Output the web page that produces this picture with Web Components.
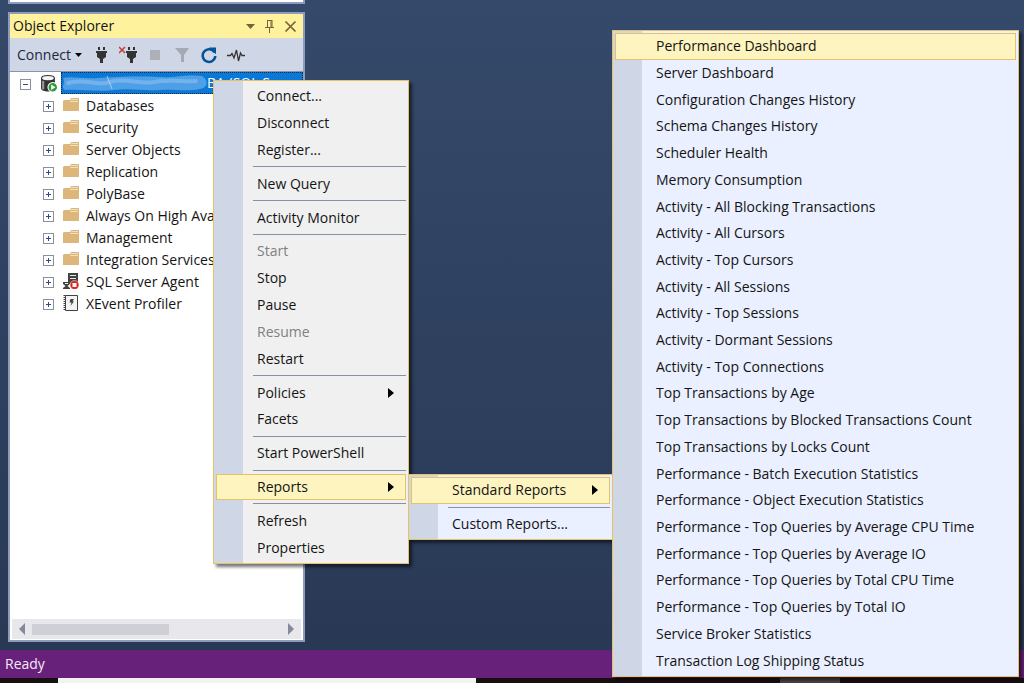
<!DOCTYPE html>
<html lang="en">
<head>
<meta charset="utf-8">
<title>Object Explorer</title>
<style>
html,body{margin:0;height:100%}
body{font-family:"Open Sans","Noto Sans",sans-serif;font-size:14px;color:#141414;overflow:hidden}
</style>
</head>
<body>
<studio-shell></studio-shell>
<script>
const define=(name,html,setup)=>customElements.define(name,class extends HTMLElement{
  connectedCallback(){
    if(this.shadowRoot)return;
    this.attachShadow({mode:'open'}).innerHTML=html;
    if(setup)setup(this,this.shadowRoot);
  }
});

const icons={
  folder:'<path fill="#dcb67a" d="M0 4l1-1h6l1-2h8v13H0z"/><path fill="#f3dfbb" d="M8 2h7v1H8zM7 4h8v1H7z"/>',
  server:'<path fill="#333" d="M1 3v10c0 4 13 4 13 0V3z"/><ellipse cx="7.500" cy="3.500" rx="6" ry="2.500" fill="#f4f4f4" stroke="#333"/><path fill="#999" d="M2 6h2v8H2z"/><circle cx="12" cy="12" r="4.500" fill="#309a3c" stroke="#fff"/><path fill="#fff" d="M10.500 9.500v5l4-2.500z"/>',
  agent:'<path fill="#424242" d="M5 0h10v10H5z"/><path stroke="#e8e8e8" d="M7 2.500h6M7 5.500h6"/><path fill="#424242" d="M0 9h7v2L4.500 13 7 15v1H0v-1l2.500-2L0 11z"/><path stroke="#eee" d="M2 10.500h3"/><circle cx="11.500" cy="12" r="4.500" fill="#e02214" stroke="#fff" stroke-width=".5"/><path fill="#fff" d="M9.500 10h4v4h-4z"/>',
  event:'<path fill="#f3f3f5" stroke="#424242" d="M2.500.500h12v15h-12z"/><path stroke="#424242" stroke-width="2" stroke-dasharray="1 1" d="M1.500 0v16"/><path fill="#424242" d="M7.500 4H11L9.500 6.500H11L7.500 11l1-3.500H6.500z"/>'
};

define('tree-node',`<style>
:host{display:flex;align-items:center;height:22px;padding-left:33px;white-space:nowrap}
:host([root]){padding-left:10px}
button{box-sizing:border-box;width:11px;height:11px;padding:0;border:1px solid #8b8f98;background:#fff;flex:none;position:relative;top:1px}
button::before,:host(:not([root])) button::after{content:"";position:absolute;left:2px;top:4px;width:5px;height:1px;background:#2f4a8f}
:host(:not([root])) button::after{left:4px;top:2px;width:1px;height:5px}
svg{width:16px;height:16px;margin:0 7px 0 9px;flex:none}
:host([root]) svg{width:17px;height:18px;margin:0 4px 0 9px}
:host([root]) .label{box-sizing:border-box;flex:1;height:22px;line-height:19px;background:#0a78d4;color:#fff;border:1px dotted #152b44;text-align:left;display:flex;overflow:hidden}
.smear{display:none}
:host([root]) .smear{display:block;width:145px;height:20px;margin:0;flex:none}
</style><button aria-label="Expand or collapse"></button><svg class="icon" viewBox="0 0 16 16"></svg><span class="label"><svg class="smear" viewBox="0 0 145 20"><path d="M1 5c10-2 20 1 35 0s40-2 60-1 26-3 44-1c7 4 6 12-2 13-15 3-22 0-40 1s-30-2-45 0-35-1-50 0c-5-3 1-7-2-12z" fill="#4f9fe6"/><path d="M6 10c20-5 28 4 42-1s30 3 44 0 28 0 42-1" fill="none" stroke="#72b3ee" stroke-width="4" stroke-linecap="round"/><path d="M45 3l5 13" stroke="#a3cff5"/></svg><slot></slot></span>`,
(h,r)=>{r.querySelector('.icon').innerHTML=icons[h.getAttribute('icon')||'folder']});

define('scroll-strip',`<style>
:host{display:flex;align-items:center;height:20px;margin:0 2px 1px;background:#e8e8ec;padding:0 6px}
button{border:0;padding:0;background:none;display:flex}svg{width:8px;height:12px;fill:#868999}
.track{flex:1;margin:0 6px}.thumb{width:55%;height:11px;background:#cfd0d6}
</style><button aria-label="Scroll left"><svg viewBox="0 0 8 12"><path d="M7 0v12L1 6z"/></svg></button><div class="track"><div class="thumb"></div></div><button aria-label="Scroll right"><svg viewBox="0 0 8 12"><path d="M1 0v12l6-6z"/></svg></button>`);

define('object-explorer',`<style>
:host{box-sizing:border-box;display:flex;flex-direction:column;border:2px solid #8e9bbc;background:#fff;min-height:0}
header{display:flex;align-items:center;height:24px;background:#fff29d;padding:0 6px 0 3px;line-height:24px}
h1{font-size:14px;font-weight:400;margin:0;flex:1}
button{font:inherit;color:inherit;border:0;padding:0;background:none;display:flex;align-items:center}
header .set{display:flex;gap:9px;align-items:center}
nav{display:flex;align-items:center;height:33px;background:#cfd6e5;padding-left:7px;color:#1b293e}
nav svg{width:18px;height:18px}
nav .tools{display:flex;margin-left:10px;gap:9px}
nav .caret{width:7px;height:4px;margin-left:4px}
.tree{flex:1;border-top:1px solid #8a93a8;min-height:0;overflow:hidden}
</style><header><h1>Object Explorer</h1><div class="set">
<button aria-label="Window position"><svg width="9" height="5"><path d="M0 0h9L4.500 5z" fill="#75633d"/></svg></button>
<button aria-label="Auto hide"><svg width="11" height="14" fill="none" stroke="#75633d"><path d="M3.500 1v7M3 1.500h5M7 1v7M8 1v7M1 8.500h9M5.500 9v5"/></svg></button>
<button aria-label="Close"><svg width="13" height="13" stroke="#75633d" stroke-width="1.700"><path d="M1.500 1.500l10 10M11.500 1.500l-10 10"/></svg></button></div></header>
<nav><button>Connect<svg class="caret" viewBox="0 0 7 4"><path d="M0 0h7L3.500 4z"/></svg></button><div class="tools">
<button aria-label="Connect object explorer"><svg viewBox="0 0 18 18" fill="#333"><path d="M6 1h2v3H6zM11 1h2v3h-2zM4 5h11v2h-1v4l-3 2v4H8v-4l-3-2V7H4z"/></svg></button>
<button aria-label="Disconnect"><svg viewBox="0 0 18 18" fill="#333"><path d="M9 1h2v3H9zM14 1h2v3h-2zM7 5h11v2h-1v4l-3 2v4h-3v-4l-3-2V7H7z"/><path d="M0 1l6 6M6 1L0 7" stroke="#c53b36" stroke-width="1.500"/></svg></button>
<button aria-label="Stop"><svg viewBox="0 0 18 18"><path d="M4 4h10v10H4z" fill="#aeb0b7"/></svg></button>
<button aria-label="Filter"><svg viewBox="0 0 18 18"><path d="M2 2h14l-5 7v7H8V9z" fill="#a5a9b3"/></svg></button>
<button aria-label="Refresh"><svg viewBox="0 0 18 18"><path d="M14.500 6.500A6.300 6.300 0 1 0 15.300 10" fill="none" stroke="#00539c" stroke-width="2.500"/><path d="M9 1.500h7v6.800z" fill="#00539c"/></svg></button>
<button aria-label="Activity Monitor"><svg viewBox="0 0 18 18"><path d="M0 9.500h3.500l1.500-2 2 4.500L9.500 4l2 11 2-8 1.500 2.500h3" fill="none" stroke="#333" stroke-width="1.300"/></svg></button>
</div></nav>
<div class="tree"><slot></slot></div><scroll-strip></scroll-strip>`);

define('menu-entry',`<style>
:host{display:flex;flex:1 1 0;min-height:0}
button{font:inherit;color:inherit;box-sizing:border-box;width:100%;display:flex;align-items:center;justify-content:space-between;border:1px solid transparent;background:none;padding:0 11px 0 40px;text-align:left;white-space:nowrap;line-height:20px}
button:disabled{color:#808080}
:host([active]) button{background:#fdf4bf;border-color:#e5c365}
svg{display:none;width:6px;height:10px}:host([sub]) svg{display:block}
</style><button role="menuitem"><span><slot></slot></span><svg viewBox="0 0 6 10"><path d="M0 0l6 5-6 5z"/></svg></button>`,
(h,r)=>{r.querySelector('button').disabled=h.hasAttribute('disabled')});

define('menu-rule',`<style>:host{display:block;flex:none;height:7px}hr{border:0;height:1px;margin:3px 0 0 37px;background:#8591a6}</style><hr>`);

define('popup-menu',`<style>
:host{box-sizing:border-box;display:flex;flex-direction:column;border:1px solid #e5c365;padding:2px;background:linear-gradient(90deg,#cfd6e5 29px,var(--face,#eaf0ff) 29px);box-shadow:3px 3px 3px #0008}
</style><slot></slot>`);

define('status-bar',`<style>:host{display:block;background:#68217a;color:#f4eaf6;height:28px;line-height:28px;padding-left:5px}</style><slot></slot>`);

define('studio-shell',`<style>
:host{display:flex;flex-direction:column;height:100vh;position:relative;overflow:hidden}
main{flex:1;min-height:0;display:flex;flex-direction:column;padding:0 8px;background:linear-gradient(#35496a,#293955)}
.above{box-sizing:border-box;width:297px;height:4px;border:2px solid #8e9bbc;border-top:0;background:#fff;margin-bottom:8px}
object-explorer{width:297px;flex:1;margin-bottom:8px}
.edge{display:flex;height:5px;background:#180f12}
.edge i{background:#f2f2f2;width:418px;margin-left:58px}
.edge b{background:#4a4144;width:60px;margin-left:304px}
popup-menu{position:absolute}
.ctx{left:213px;top:80px;width:196px;height:484px;--face:#f0f0f0}
.reports{left:408px;top:474px;width:205px;height:66px}
.standard{left:612px;top:30px;width:407px;height:647px}
</style>
<main><div class="above"></div><object-explorer>
<tree-node root icon="server">BA (SQL S</tree-node>
<tree-node>Databases</tree-node><tree-node>Security</tree-node><tree-node>Server Objects</tree-node><tree-node>Replication</tree-node><tree-node>PolyBase</tree-node><tree-node>Always On High Ava</tree-node><tree-node>Management</tree-node><tree-node>Integration Services</tree-node><tree-node icon="agent">SQL Server Agent</tree-node><tree-node icon="event">XEvent Profiler</tree-node>
</object-explorer></main>
<status-bar>Ready</status-bar><div class="edge"><i></i><b></b></div>
<popup-menu class="ctx" role="menu"><menu-entry>Connect...</menu-entry><menu-entry>Disconnect</menu-entry><menu-entry>Register...</menu-entry><menu-rule></menu-rule><menu-entry>New Query</menu-entry><menu-rule></menu-rule><menu-entry>Activity Monitor</menu-entry><menu-rule></menu-rule><menu-entry disabled>Start</menu-entry><menu-entry>Stop</menu-entry><menu-entry>Pause</menu-entry><menu-entry disabled>Resume</menu-entry><menu-entry>Restart</menu-entry><menu-rule></menu-rule><menu-entry sub>Policies</menu-entry><menu-entry>Facets</menu-entry><menu-rule></menu-rule><menu-entry>Start PowerShell</menu-entry><menu-rule></menu-rule><menu-entry active sub>Reports</menu-entry><menu-rule></menu-rule><menu-entry>Refresh</menu-entry><menu-entry>Properties</menu-entry></popup-menu>
<popup-menu class="reports" role="menu"><menu-entry active sub>Standard Reports</menu-entry><menu-rule></menu-rule><menu-entry>Custom Reports...</menu-entry></popup-menu>
<popup-menu class="standard" role="menu"><menu-entry active>Performance Dashboard</menu-entry><menu-entry>Server Dashboard</menu-entry><menu-entry>Configuration Changes History</menu-entry><menu-entry>Schema Changes History</menu-entry><menu-entry>Scheduler Health</menu-entry><menu-entry>Memory Consumption</menu-entry><menu-entry>Activity - All Blocking Transactions</menu-entry><menu-entry>Activity - All Cursors</menu-entry><menu-entry>Activity - Top Cursors</menu-entry><menu-entry>Activity - All Sessions</menu-entry><menu-entry>Activity - Top Sessions</menu-entry><menu-entry>Activity - Dormant Sessions</menu-entry><menu-entry>Activity - Top Connections</menu-entry><menu-entry>Top Transactions by Age</menu-entry><menu-entry>Top Transactions by Blocked Transactions Count</menu-entry><menu-entry>Top Transactions by Locks Count</menu-entry><menu-entry>Performance - Batch Execution Statistics</menu-entry><menu-entry>Performance - Object Execution Statistics</menu-entry><menu-entry>Performance - Top Queries by Average CPU Time</menu-entry><menu-entry>Performance - Top Queries by Average IO</menu-entry><menu-entry>Performance - Top Queries by Total CPU Time</menu-entry><menu-entry>Performance - Top Queries by Total IO</menu-entry><menu-entry>Service Broker Statistics</menu-entry><menu-entry>Transaction Log Shipping Status</menu-entry></popup-menu>`);
</script>
</body>
</html>
